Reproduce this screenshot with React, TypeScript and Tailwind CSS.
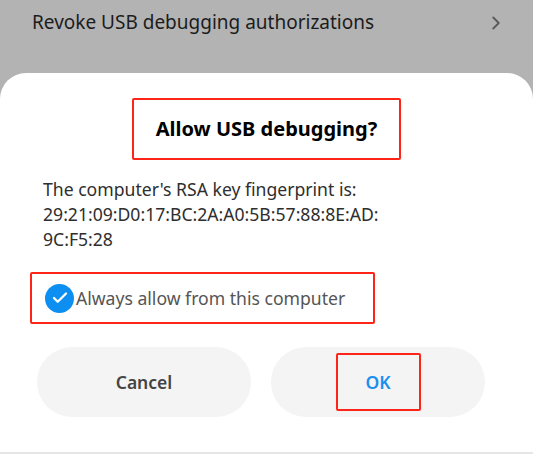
import { Check, ChevronRight } from "lucide-react";

const font = { fontFamily: '"Noto Sans", "Liberation Sans", sans-serif' };

const App = () => {
  return (
    <div
      className="w-[533px] h-[454px] bg-[#b3b3b3] flex flex-col overflow-hidden"
      style={font}
    >
      {/* Settings row behind the dialog */}
      <div className="h-[73px] shrink-0 flex items-start justify-between pl-[32px] pr-[26px] pt-[7px]">
        <span className="text-[19px] leading-[30px] text-[#1c1c1c]">
          Revoke USB debugging authorizations
        </span>
        <ChevronRight size={22} strokeWidth={2} className="text-[#5a5a5a] mt-[5px]" />
      </div>

      {/* Dialog */}
      <div className="flex-1 bg-white rounded-t-[26px] flex flex-col relative">
        <div className="flex justify-center pt-[25px]">
          <div className="w-[269px] h-[62px] border-2 border-[#ff2418] rounded-[2px] flex items-center justify-center">
            <span className="text-[20px] font-bold text-black">Allow USB debugging?</span>
          </div>
        </div>

        <div className="pl-[43px] pt-[17px] text-[17.6px] leading-[25px] text-[#2e2e2e]">
          <p>The computer's RSA key fingerprint is:</p>
          <p>29:21:09:D0:17:BC:2A:A0:5B:57:88:8E:AD:</p>
          <p>9C:F5:28</p>
        </div>

        <div className="pl-[30px] pt-[20px]">
          <div className="w-[345px] h-[52px] border-2 border-[#ff2418] rounded-[2px] flex items-center pl-[13px]">
            <div className="w-[29px] h-[29px] rounded-full bg-[#0d8ff2] flex items-center justify-center shrink-0">
              <Check size={18} strokeWidth={3} className="text-white" />
            </div>
            <span className="ml-[2px] text-[17.6px] text-[#555555]">
              Always allow from this computer
            </span>
          </div>
        </div>

        <div className="flex gap-[20px] pl-[37px] pt-[23px]">
          <button className="w-[214px] h-[70px] rounded-full bg-[#f4f4f4] text-[17.5px] font-semibold text-[#444444]">
            Cancel
          </button>
          <button className="w-[214px] h-[70px] rounded-full bg-[#f4f4f4] flex items-center justify-center">
            <span className="w-[85px] h-[58px] border-2 border-[#ff2418] rounded-[2px] flex items-center justify-center text-[17.5px] font-semibold text-[#1a8ff0]">
              OK
            </span>
          </button>
        </div>

        <div className="absolute left-0 right-0 bottom-0 h-[2px] bg-[#e6e6e6]" />
      </div>
    </div>
  );
};

export default App;
